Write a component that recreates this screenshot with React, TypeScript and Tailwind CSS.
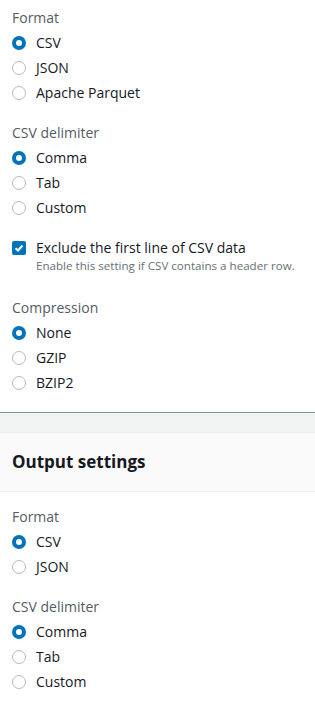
import React from "react";

function Radio({ label, checked }: { label: string; checked?: boolean }) {
  return (
    <div className="flex items-center h-[25px]">
      {checked ? (
        <span className="w-[14px] h-[14px] rounded-full bg-[#0073bb] flex items-center justify-center shrink-0">
          <span className="w-[6px] h-[6px] rounded-full bg-white" />
        </span>
      ) : (
        <span className="w-[14px] h-[14px] rounded-full border-[1.5px] border-[#b4bcbd] bg-white shrink-0" />
      )}
      <span className="ml-[10px] text-[14px] text-[#16191f]">{label}</span>
    </div>
  );
}

function Group({ label, options }: { label: string; options: string[] }) {
  return (
    <div className="flex flex-col">
      <div className="h-[25px] flex items-center text-[14px] text-[#545b64]">{label}</div>
      {options.map((o, i) => (
        <Radio key={o} label={o} checked={i === 0} />
      ))}
    </div>
  );
}

export default function App() {
  return (
    <div className="w-[315px] h-[710px] bg-white overflow-hidden" style={{ fontFamily: '"Open Sans", "Noto Sans", sans-serif' }}>
      <div className="px-[12px] pt-[5px] flex flex-col">
        <Group label="Format" options={["CSV", "JSON", "Apache Parquet"]} />
        <div className="h-[15px]" />
        <Group label="CSV delimiter" options={["Comma", "Tab", "Custom"]} />
        <div className="h-[18px]" />
        <div className="flex items-start">
          <span className="w-[14px] h-[14px] mt-[3px] rounded-[2px] bg-[#0073bb] flex items-center justify-center shrink-0">
            <svg width="10" height="10" viewBox="0 0 10 10">
              <path d="M1.5 5.2 L4 7.5 L8.5 2.5" stroke="white" strokeWidth="2" fill="none" />
            </svg>
          </span>
          <div className="ml-[10px] flex flex-col">
            <span className="text-[14px] leading-[20px] text-[#16191f] whitespace-nowrap">Exclude the first line of CSV data</span>
            <span className="text-[11.6px] leading-[16px] text-[#687078] whitespace-nowrap">Enable this setting if CSV contains a header row.</span>
          </div>
        </div>
        <div className="h-[21px]" />
        <Group label="Compression" options={["None", "GZIP", "BZIP2"]} />
      </div>
      <div className="mt-[17px] border-t border-[#879596] h-[20px] bg-[#f2f3f3]" />
      <div className="border-t border-b border-[#eaeded] bg-[#fafafa] h-[60px] flex items-center px-[12px]">
        <span className="text-[17px] font-bold text-[#16191f]">Output settings</span>
      </div>
      <div className="px-[12px] pt-[12px] flex flex-col">
        <Group label="Format" options={["CSV", "JSON"]} />
        <div className="h-[15px]" />
        <Group label="CSV delimiter" options={["Comma", "Tab", "Custom"]} />
      </div>
    </div>
  );
}
